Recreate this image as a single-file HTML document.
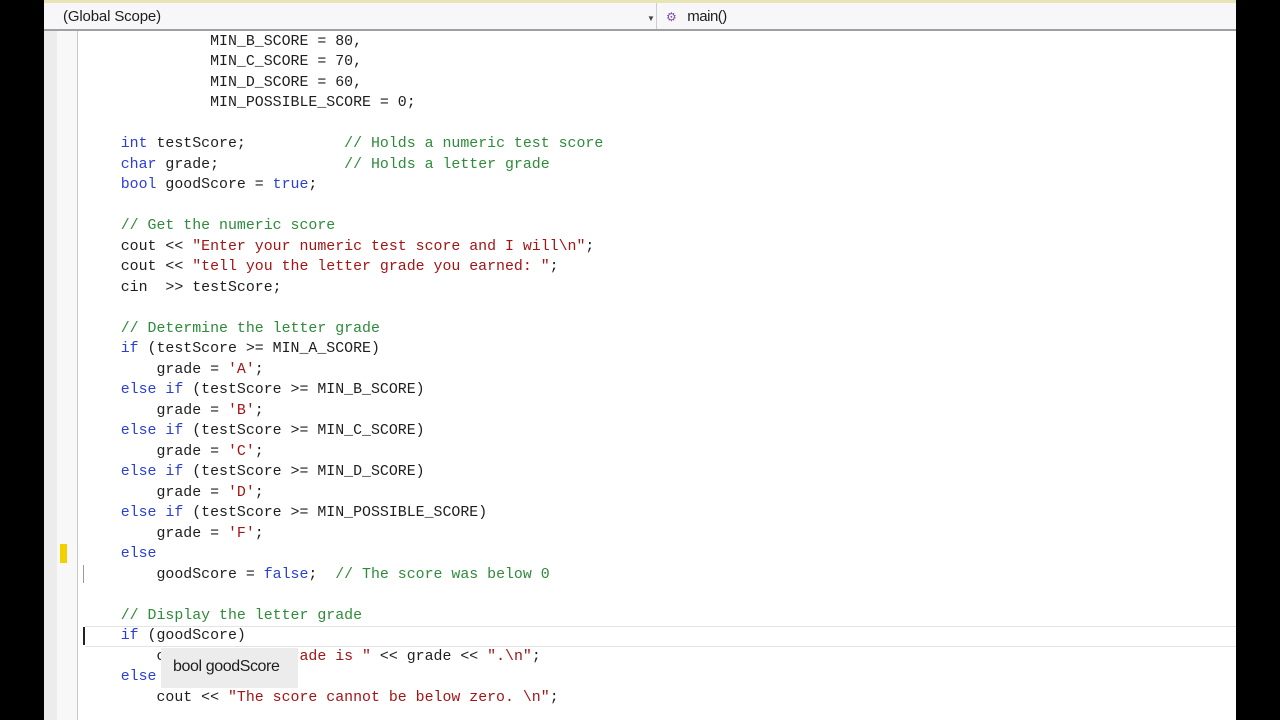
<!DOCTYPE html>
<html><head><style>
body{margin:0;width:1280px;height:720px;background:#000;overflow:hidden;position:relative;font-family:"Liberation Sans",sans-serif}
#win{position:absolute;left:44px;top:0;width:1192px;height:720px;background:#fff}
#top{position:absolute;left:0;top:0;width:1192px;height:3px;background:#e8e4b4}
#bar{position:absolute;left:0;top:3px;width:1192px;height:26px;background:#f7f7f9;border-bottom:2px solid #a0a0a0}
#bar .l{position:absolute;left:19px;top:5px;font-size:15px;color:#1e1e1e;letter-spacing:-0.15px}
#bar .r{position:absolute;left:622px;top:5px;font-size:15px;color:#1e1e1e;letter-spacing:-0.5px}
#sep{position:absolute;left:612px;top:3px;width:1px;height:26px;background:#ccc}
#dd{position:absolute;left:603px;top:11px;font-size:8px;color:#444}
#g1{position:absolute;left:0;top:31px;width:13px;height:689px;background:#ececec}
#g2{position:absolute;left:13px;top:31px;width:20px;height:689px;background:#f8f8f8}
#ml{position:absolute;left:33px;top:31px;width:1px;height:689px;background:#c8c8c8}
#code{position:absolute;left:85px;top:32px;font-family:"Liberation Mono",monospace;font-size:14.9px;line-height:20.48px;white-space:pre;color:#1e1e1e}
.k{color:#2a3fd4}.c{color:#2e8b3a}.s{color:#a31515}
#cur{position:absolute;left:85px;top:626px;width:1151px;height:19px;border-top:1px solid #e4e4e4;border-bottom:1px solid #e4e4e4}
#tip{position:absolute;left:161px;top:648px;width:137px;height:40px;background:#ececec;font-size:16px;color:#1e1e1e}
#tip span{position:absolute;left:12px;top:10px;letter-spacing:-0.4px}
</style></head><body>
<div id="win">
<div id="top"></div>
<div id="bar"><span class="l">(Global Scope)</span><span id="dd">▼</span><span class="r"><span style="color:#8050a0;font-size:12px">⚙</span>&nbsp;&nbsp; main()</span></div>
<div id="sep"></div>
<div id="g1"></div><div id="g2"></div><div id="ml"></div>
<div style="position:absolute;left:16px;top:544px;width:7px;height:19px;background:#f3d000"></div>
<div style="position:absolute;left:39px;top:565px;width:1px;height:18px;background:#999"></div>
<div style="position:absolute;left:39px;top:627px;width:2px;height:18px;background:#222"></div>
</div>
<div id="cur"></div>
<div id="code">              MIN_B_SCORE = 80,
              MIN_C_SCORE = 70,
              MIN_D_SCORE = 60,
              MIN_POSSIBLE_SCORE = 0;

    <span class="k">int</span> testScore;           <span class="c">// Holds a numeric test score</span>
    <span class="k">char</span> grade;              <span class="c">// Holds a letter grade</span>
    <span class="k">bool</span> goodScore = <span class="k">true</span>;

    <span class="c">// Get the numeric score</span>
    cout &lt;&lt; <span class="s">"Enter your numeric test score and I will\n"</span>;
    cout &lt;&lt; <span class="s">"tell you the letter grade you earned: "</span>;
    cin  &gt;&gt; testScore;

    <span class="c">// Determine the letter grade</span>
    <span class="k">if</span> (testScore &gt;= MIN_A_SCORE)
        grade = <span class="s">'A'</span>;
    <span class="k">else if</span> (testScore &gt;= MIN_B_SCORE)
        grade = <span class="s">'B'</span>;
    <span class="k">else if</span> (testScore &gt;= MIN_C_SCORE)
        grade = <span class="s">'C'</span>;
    <span class="k">else if</span> (testScore &gt;= MIN_D_SCORE)
        grade = <span class="s">'D'</span>;
    <span class="k">else if</span> (testScore &gt;= MIN_POSSIBLE_SCORE)
        grade = <span class="s">'F'</span>;
    <span class="k">else</span>
        goodScore = <span class="k">false</span>;  <span class="c">// The score was below 0</span>

    <span class="c">// Display the letter grade</span>
    <span class="k">if</span> (goodScore)
        cout &lt;&lt; <span class="s">"Your grade is "</span> &lt;&lt; grade &lt;&lt; <span class="s">".\n"</span>;
    <span class="k">else</span>
        cout &lt;&lt; <span class="s">"The score cannot be below zero. \n"</span>;</div>
<div id="tip"><span>bool goodScore</span></div>
</body></html>
